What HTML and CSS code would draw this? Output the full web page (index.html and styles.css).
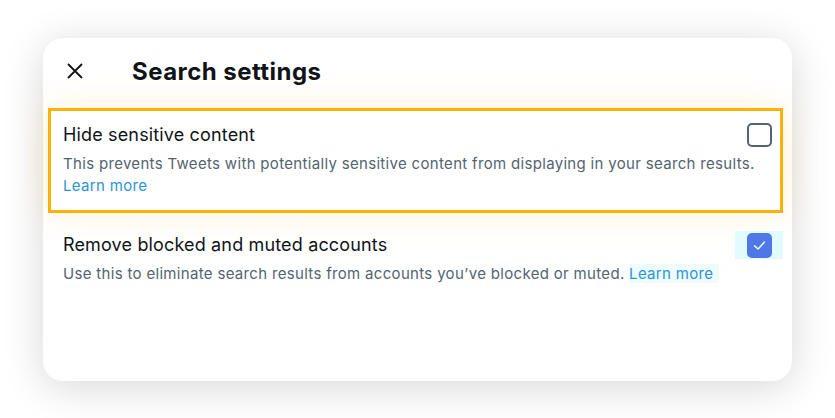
FILE: index.html
```html
<!DOCTYPE html>
<html lang="en">
<head>
  <meta charset="UTF-8">
  <title>Search settings</title>
  <link rel="stylesheet" href="styles.css">
</head>
<body>
  <div class="card">
    <div class="header">
      <svg class="close" viewBox="0 0 16 16" width="16" height="16">
        <path d="M1 1 L15 15 M15 1 L1 15" stroke="#0f1419" stroke-width="1.8" fill="none"/>
      </svg>
      <h2>Search settings</h2>
    </div>

    <div class="row highlight">
      <div class="row-head">
        <div class="title">Hide sensitive content</div>
        <span class="box"></span>
      </div>
      <div class="desc">This prevents Tweets with potentially sensitive content from displaying in your search results. <a href="#">Learn more</a></div>
    </div>

    <div class="row">
      <div class="row-head">
        <div class="title">Remove blocked and muted accounts</div>
        <span class="box-wrap">
          <span class="box checked">
            <svg viewBox="0 0 24 24" width="17" height="17">
              <path d="M5 12.5 L10 17 L19 7" stroke="#e8fbff" stroke-width="2.2" fill="none" stroke-linecap="round" stroke-linejoin="round"/>
            </svg>
          </span>
        </span>
      </div>
      <div class="desc">Use this to eliminate search results from accounts you’ve blocked or muted. <a href="#" class="tint">Learn more</a></div>
    </div>
  </div>
</body>
</html>
```

FILE: styles.css
```css
body {
  margin: 0;
  min-height: 418px;
  background: #ffffff;
  font-family: Inter, "Noto Sans", sans-serif;
  color: #0f1419;
}
.card {
  margin: 38px 0 0 43px;
  width: 749px;
  height: 343px;
  background: #ffffff;
  border-radius: 20px;
  box-shadow: 0 6px 40px rgba(0, 0, 0, 0.16);
  box-sizing: border-box;
  padding-top: 4px;
}
.header {
  display: flex;
  align-items: center;
  height: 58px;
  padding-left: 24px;
}
h2 {
  margin: 0 0 0 49px;
  font-size: 24px;
  font-weight: 700;
  letter-spacing: 0.45px;
}
.row {
  margin: 0 9px 0 5px;
  border: 3px solid transparent;
  padding: 12px 8px 0 12px;
}
.row-head {
  display: flex;
  justify-content: space-between;
  align-items: flex-start;
}
.highlight {
  margin-top: 8px;
  border-color: #fbb10a;
  height: 105px;
  box-sizing: border-box;
  margin-bottom: 5px;
  box-shadow: 0 0 32px rgba(255, 196, 60, 0.22);
}
.title {
  font-size: 18px;
  line-height: 24px;
  letter-spacing: 0.15px;
  color: #0f1419;
}
.desc {
  margin-top: 6px;
  font-size: 15px;
  line-height: 22px;
  letter-spacing: 0.32px;
  color: #536471;
}
.desc a {
  color: #2a94d6;
  text-decoration: none;
}
.desc a.tint {
  background: #eefcfd;
  padding: 0 6px 0 0;
}
.box {
  flex: none;
  width: 25px;
  height: 24px;
  box-sizing: border-box;
  border: 2px solid #536471;
  border-radius: 5px;
}
.box-wrap {
  flex: none;
  height: 25px;
  background: #e2fbfc;
  padding: 2px 11px 1px 12px;
  margin: -2px -11px -3px 0;
}
.box.checked {
  display: flex;
  align-items: center;
  justify-content: center;
  height: 25px;
  border: none;
  background: #4f78e6;
}
```
